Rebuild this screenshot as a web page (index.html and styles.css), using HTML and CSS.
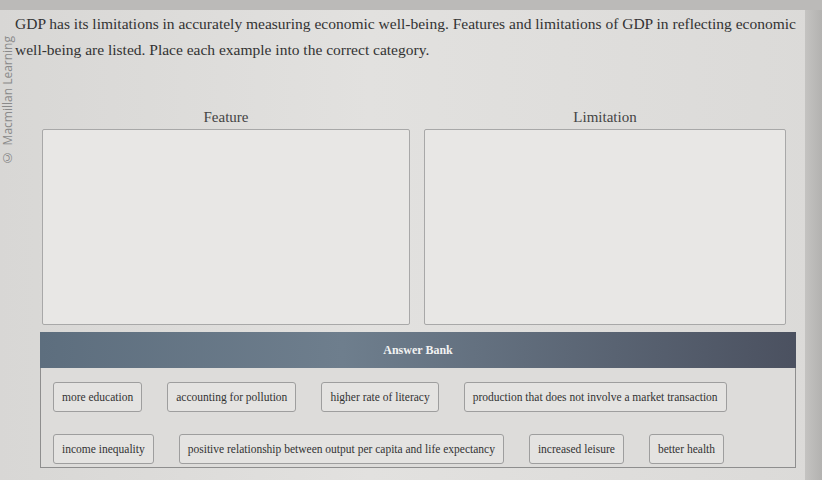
FILE: index.html
```html
<!DOCTYPE html>
<html lang="en">
<head>
	<meta charset="UTF-8">
	<title>GDP Features and Limitations</title>
	<link rel="stylesheet" href="styles.css">
</head>
<body>
	<div class="topbar"></div>
	<div class="page">
		<div class="credit"><span>© Macmillan Learning</span></div>
		<div class="main">
			<p class="prompt">GDP has its limitations in accurately measuring economic well-being. Features and limitations of GDP in reflecting economic well-being are listed. Place each example into the correct category.</p>
			<div class="categories">
				<div class="category">
					<div class="cat-title">Feature</div>
					<div class="drop"></div>
				</div>
				<div class="category">
					<div class="cat-title">Limitation</div>
					<div class="drop"></div>
				</div>
			</div>
			<div class="bank">
				<div class="bank-head">Answer Bank</div>
				<div class="bank-body">
					<span class="chip">more education</span>
					<span class="chip">accounting for pollution</span>
					<span class="chip">higher rate of literacy</span>
					<span class="chip">production that does not involve a market transaction</span>
					<span class="chip">income inequality</span>
					<span class="chip">positive relationship between output per capita and life expectancy</span>
					<span class="chip">increased leisure</span>
					<span class="chip">better health</span>
				</div>
			</div>
		</div>
		<div class="edge"></div>
	</div>
</body>
</html>
```

FILE: styles.css
```css
*{
	margin: 0;
	padding: 0;
	box-sizing: border-box;
}
body{
	width: 822px;
	height: 480px;
	overflow: hidden;
	background: linear-gradient(90deg, #d8d7d5 0%, #e2e1df 45%, #dbdad8 100%);
	font-family: "Liberation Serif", "DejaVu Serif", serif;
	color: #3a3a3a;
}
.topbar{
	height: 10px;
	background: #bbbab8;
}
.page{
	display: flex;
	height: 470px;
}
.credit{
	width: 15px;
	flex-shrink: 0;
}
.credit span{
	display: block;
	margin-top: 26px;
	writing-mode: vertical-rl;
	transform: rotate(180deg);
	font-family: "Open Sans", "Liberation Sans", sans-serif;
	font-size: 12px;
	line-height: 15px;
	color: #8a8a8a;
	white-space: nowrap;
}
.main{
	flex: 1;
}
.edge{
	width: 17px;
	background: linear-gradient(90deg, #c4c3c1, #b3b2b0);
}
.prompt{
	font-size: 15.5px;
	line-height: 26px;
	color: #333;
	padding-top: 1px;
	padding-right: 6px;
}
.categories{
	display: grid;
	grid-template-columns: 368px 362px;
	gap: 14px;
	margin: 46px 0 0 27px;
}
.cat-title{
	text-align: center;
	font-size: 15px;
	color: #444;
	height: 18px;
	margin-bottom: 2px;
}
.drop{
	height: 196px;
	border: 1px solid #a8a8a8;
	border-radius: 2px;
	background: #e8e7e5;
}
.bank{
	margin: 7px 0 0 25px;
	width: 756px;
}
.bank-head{
	height: 36px;
	line-height: 36px;
	text-align: center;
	color: #f2f2f2;
	font-size: 12px;
	font-weight: bold;
	background: linear-gradient(90deg, #5d6e7e, #6e7e8d 40%, #4b5160);
}
.bank-body{
	height: 100px;
	border: 1px solid #8e8e8e;
	border-top: none;
	background: #dddcda;
	display: flex;
	flex-wrap: wrap;
	align-content: flex-start;
	column-gap: 25px;
	row-gap: 22px;
	padding: 14px 12px 0 12px;
}
.chip{
	height: 30px;
	line-height: 28px;
	padding: 0 8px;
	font-size: 11.5px;
	color: #333;
	background: #e4e3e1;
	border: 1px solid #9e9e9e;
	border-radius: 3px;
	white-space: nowrap;
}
```
